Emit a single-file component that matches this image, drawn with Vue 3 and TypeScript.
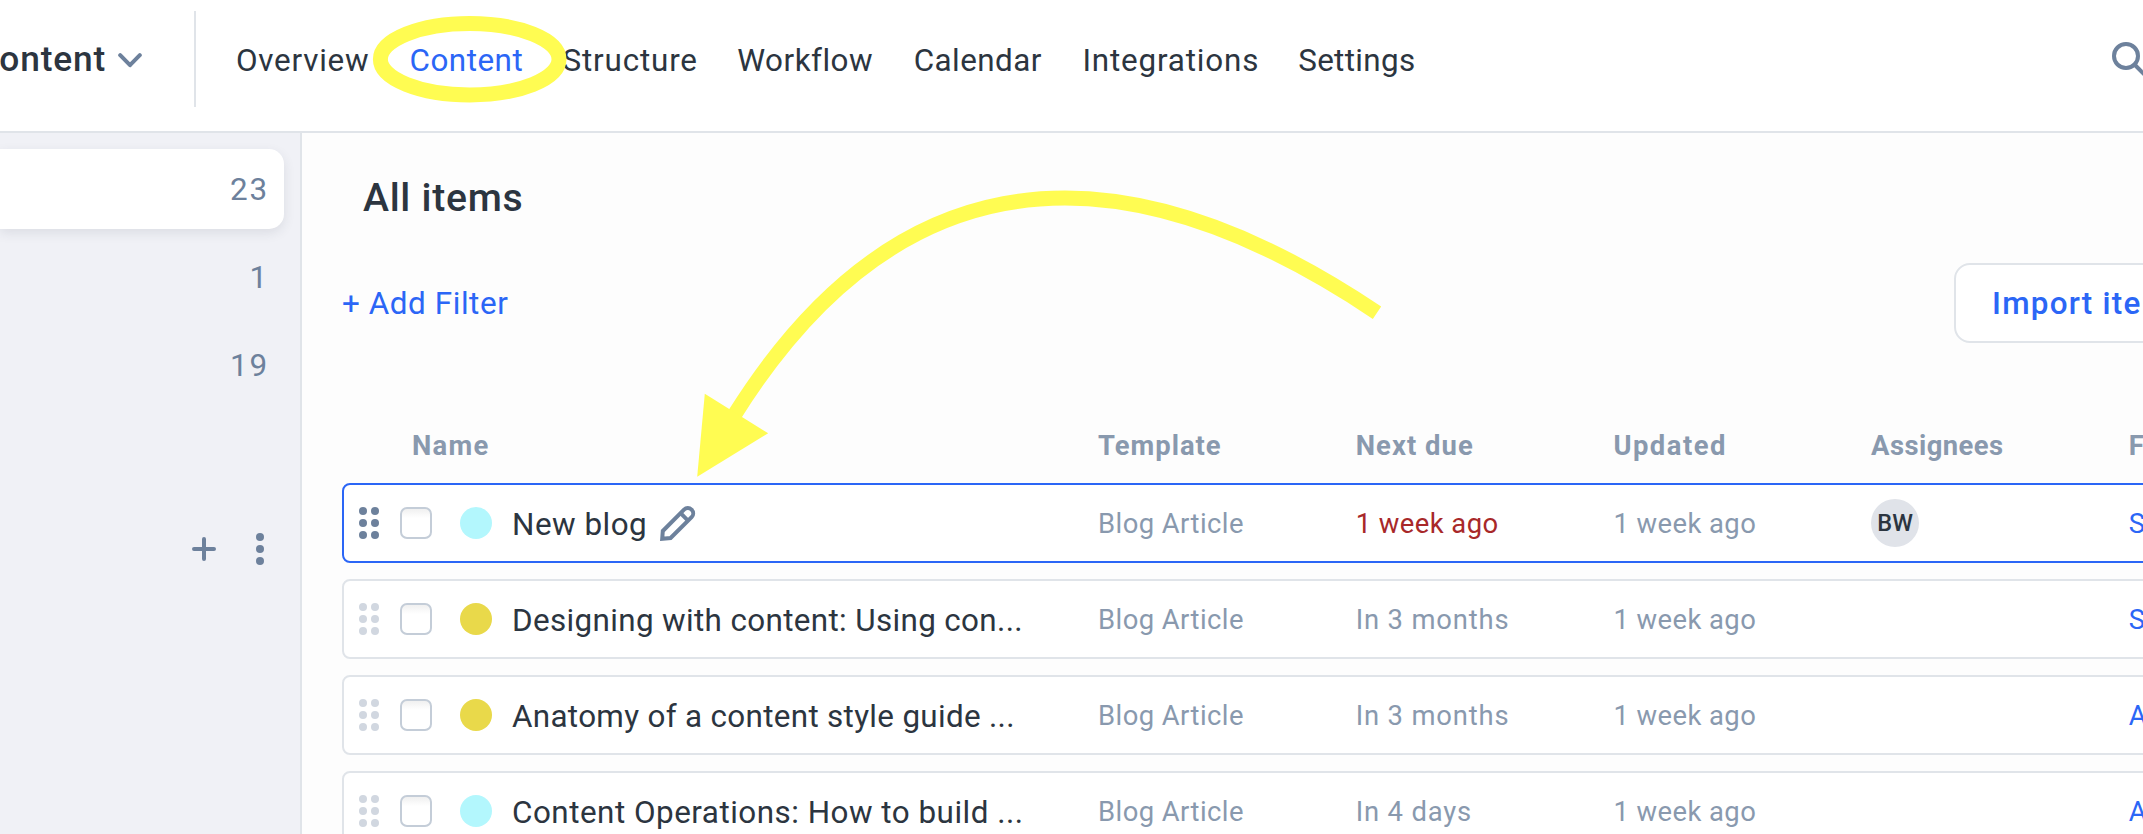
<script setup lang="ts">
interface NavEntry {
  label: string
  tracking: number
  active?: boolean
}

interface Item {
  name: string
  tracking: number
  status: 'draft' | 'review'
  due: string
  overdue?: boolean
  folder: string
  active?: boolean
  assignee?: string
}

const nav: NavEntry[] = [
  { label: 'Overview', tracking: 0.76 },
  { label: 'Content', tracking: 0.5, active: true },
  { label: 'Structure', tracking: 0.83 },
  { label: 'Workflow', tracking: 0.51 },
  { label: 'Calendar', tracking: 0.46 },
  { label: 'Integrations', tracking: 0.83 },
  { label: 'Settings', tracking: 0.33 },
]

const columns: { label: string; tracking: number }[] = [
  { label: 'Name', tracking: 1.23 },
  { label: 'Template', tracking: 1 },
  { label: 'Next due', tracking: 1.06 },
  { label: 'Updated', tracking: 1.5 },
  { label: 'Assignees', tracking: 0.45 },
  { label: 'F', tracking: 0 },
]

const items: Item[] = [
  { name: 'New blog', tracking: 0.5, status: 'draft', due: '1 week ago', overdue: true, folder: 'S', active: true, assignee: 'BW' },
  { name: 'Designing with content: Using con...', tracking: 0.36, status: 'review', due: 'In 3 months', folder: 'S' },
  { name: 'Anatomy of a content style guide ...', tracking: 0.32, status: 'review', due: 'In 3 months', folder: 'A' },
  { name: 'Content Operations: How to build ...', tracking: 0.5, status: 'draft', due: 'In 4 days', folder: 'A' },
]

const track = (value: number) => ({ letterSpacing: `${value}px` })
</script>

<template>
  <div class="app">
    <header class="topbar">
      <div class="project">
        <span class="project-name">ontent</span>
        <svg class="chevron" width="24" height="16" viewBox="0 0 24 16">
          <path d="M2.2 2.2 12 12.2 21.8 2.2" />
        </svg>
      </div>
      <nav class="nav">
        <a v-for="n in nav" :key="n.label" class="nav-link" :class="{ current: n.active }">
          <span :style="track(n.tracking)">{{ n.label }}</span>
        </a>
      </nav>
      <svg class="search" width="40" height="40" viewBox="0 0 40 40">
        <circle cx="14" cy="14" r="12" />
        <path d="M22.5 22.5 32 32" />
      </svg>
    </header>

    <div class="body">
      <aside class="sidebar">
        <div class="folder selected"><span class="count">23</span></div>
        <div class="folder"><span class="count">1</span></div>
        <div class="folder"><span class="count">19</span></div>
        <div class="folder-actions">
          <svg width="24" height="24" viewBox="0 0 24 24">
            <path class="plus" d="M12 2v20M2 12h20" />
          </svg>
          <svg width="8" height="32" viewBox="0 0 8 32">
            <circle v-for="cy in [4, 16, 28]" :key="cy" cx="4" :cy="cy" r="4" />
          </svg>
        </div>
      </aside>

      <main class="main">
        <h1 class="title">All items</h1>
        <div class="toolbar">
          <a class="add-filter">+ Add Filter</a>
          <button class="import">Import items</button>
        </div>

        <div class="thead">
          <span v-for="c in columns" :key="c.label" :style="track(c.tracking)">{{ c.label }}</span>
        </div>

        <div class="rows">
          <div v-for="i in items" :key="i.name" class="row" :class="{ active: i.active }">
            <div class="name-cell">
              <svg class="grip" width="20" height="32" viewBox="0 0 20 32">
                <template v-for="cy in [4, 16, 28]" :key="cy">
                  <circle cx="4" :cy="cy" r="4" />
                  <circle cx="16" :cy="cy" r="4" />
                </template>
              </svg>
              <span class="checkbox"></span>
              <span class="status" :class="i.status"></span>
              <span class="name" :style="track(i.tracking)">{{ i.name }}</span>
              <svg v-if="i.active" class="pencil" width="36" height="36" viewBox="0 0 36 36">
                <path d="M2.2 33.8 2.8 26 24 4.6a5.6 5.6 0 0 1 7.6 0 5.4 5.4 0 0 1 0 7.6L10.6 33Z" />
                <path d="M20.6 8.2 28 15.6" />
              </svg>
            </div>
            <span class="cell template">Blog Article</span>
            <span class="cell" :class="i.overdue ? 'overdue' : 'due'">{{ i.due }}</span>
            <span class="cell updated">1 week ago</span>
            <span class="people"><span v-if="i.assignee" class="avatar">{{ i.assignee }}</span></span>
            <span class="cell link">{{ i.folder }}</span>
          </div>
        </div>
      </main>
    </div>

    <svg class="annotations" width="2143" height="834" viewBox="0 0 2143 834">
      <ellipse cx="469.7" cy="59.2" rx="89.3" ry="35.7" />
      <path class="shaft" d="M1377 312.7C1091 121 882 180 735 414" />
      <path class="head" d="M704.8 393.7 768.2 433.3 697.2 476.7Z" />
    </svg>
  </div>
</template>

<style>
body {
  overflow: hidden;
}
</style>

<style scoped>
.app {
  position: relative;
  width: 2143px;
  height: 834px;
  overflow: hidden;
  background: #fdfdfd;
  color: #2c3540;
  font-family: Roboto, "Liberation Sans", sans-serif;
  font-size: 31.4px;
}
.topbar {
  display: flex;
  box-sizing: border-box;
  height: 133px;
  border-bottom: 2px solid #e0e4e9;
  background: #fff;
}
.project {
  display: flex;
  align-items: center;
  justify-content: flex-end;
  box-sizing: border-box;
  width: 196px;
  height: 96px;
  margin-top: 11px;
  padding-right: 52px;
  border-right: 2px solid #e0e4e9;
}
.project-name {
  margin-right: 12px;
  font-size: 35.3px;
  font-weight: 500;
  letter-spacing: 0.82px;
}
.chevron {
  flex: none;
  margin-top: 4px;
}
.chevron path,
.search {
  fill: none;
  stroke: #6d819c;
  stroke-width: 4;
  stroke-linecap: round;
  stroke-linejoin: round;
}
.nav {
  display: grid;
  grid-template-columns: 173.5px 153px 174.7px 176.5px 168.7px 215.8px 140px;
  align-items: center;
  height: 120px;
  margin-left: 40px;
}
.nav-link {
  white-space: nowrap;
}
.nav-link.current {
  color: #2b66f6;
}
.search {
  flex: none;
  margin: 42px 0 0 673.8px;
}
.body {
  display: flex;
  height: 701px;
}
.sidebar {
  box-sizing: border-box;
  width: 302px;
  padding: 16px 16px 0 0;
  border-right: 2px solid #e0e4e9;
  background: #f0f1f6;
  color: #6d819c;
}
.folder {
  display: flex;
  align-items: center;
  justify-content: flex-end;
  box-sizing: border-box;
  height: 80px;
  margin-bottom: 8px;
  padding-right: 15px;
}
.folder.selected {
  border-radius: 0 15px 15px 0;
  background: #fff;
  box-shadow: 0 4px 12px rgba(40, 50, 70, 0.1);
}
.count {
  letter-spacing: 1.8px;
}
.folder-actions {
  display: flex;
  align-items: center;
  justify-content: flex-end;
  gap: 40px;
  height: 80px;
  margin-top: 104px;
  padding-right: 20px;
  fill: #6d819c;
}
.plus {
  fill: none;
  stroke: #6d819c;
  stroke-width: 4;
  stroke-linecap: round;
}
.main {
  flex: 1;
  min-width: 0;
  padding: 41px 0 0 40px;
}
.title {
  margin: 0 0 0 21px;
  font-size: 39.2px;
  line-height: 48px;
  font-weight: 500;
  letter-spacing: 0.7px;
}
.toolbar {
  display: flex;
  align-items: center;
  justify-content: space-between;
  margin-top: 41px;
  height: 80px;
}
.add-filter {
  color: #2b66f6;
  letter-spacing: 0.58px;
}
.import {
  box-sizing: border-box;
  width: 260px;
  height: 80px;
  flex: none;
  margin-right: -71px;
  padding: 0 0 0 36px;
  border: 2px solid #e0e4e9;
  border-radius: 16px;
  background: #fff;
  color: #2b66f6;
  font: 500 31.4px Roboto, "Liberation Sans", sans-serif;
  letter-spacing: 1.25px;
  text-align: left;
  white-space: nowrap;
}
.thead {
  display: grid;
  grid-template-columns: 686px repeat(5, 257.7px);
  align-items: center;
  height: 40px;
  margin: 83px 0 17px 70px;
  color: #8999ae;
  font-size: 27.4px;
  font-weight: 700;
}
.rows {
  display: flex;
  flex-direction: column;
  gap: 16px;
}
.row {
  display: grid;
  grid-template-columns: 754px repeat(5, 257.7px);
  align-items: center;
  box-sizing: border-box;
  width: 2200px;
  height: 80px;
  border: 2px solid #e0e4e9;
  border-radius: 8px;
  background: #fff;
}
.row.active {
  border-color: #2b66f6;
}
.name-cell {
  display: flex;
  align-items: center;
  padding-left: 15px;
}
.grip {
  fill: #d1d7e0;
}
.active .grip {
  fill: #6d819c;
}
.checkbox {
  box-sizing: border-box;
  width: 32px;
  height: 32px;
  margin: 0 28px 0 21px;
  border: 2px solid #c4cdd8;
  border-radius: 7px;
  background: linear-gradient(#f0f0f0, #fff 9px);
}
.status {
  width: 32px;
  height: 32px;
  margin-right: 20px;
  border-radius: 50%;
}
.draft {
  background: #b3f7fd;
}
.review {
  background: #e9d94a;
}
.name {
  padding-top: 2px;
  white-space: nowrap;
}
.pencil {
  margin-left: 13px;
  fill: none;
  stroke: #6d819c;
  stroke-width: 4;
}
.cell {
  padding-top: 2px;
  color: #8999ae;
  font-size: 27.4px;
  letter-spacing: 0.45px;
}
.due {
  letter-spacing: 0.84px;
}
.overdue {
  color: #a82829;
}
.link {
  color: #2b66f6;
}
.avatar {
  display: flex;
  align-items: center;
  justify-content: center;
  width: 48px;
  height: 48px;
  border-radius: 50%;
  background: #e0e3e9;
  font-size: 23.5px;
  font-weight: 500;
}
.annotations {
  position: absolute;
  inset: 0;
  fill: none;
  stroke: #fffc52;
  stroke-width: 15;
  pointer-events: none;
}
.head {
  fill: #fffc52;
  stroke: none;
}
</style>
